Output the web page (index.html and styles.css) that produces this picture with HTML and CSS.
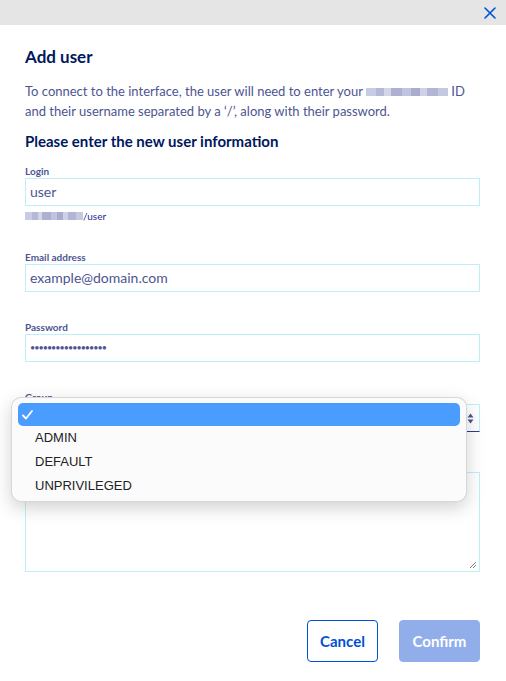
FILE: index.html
```html
<!DOCTYPE html>
<html lang="en">
<head>
<meta charset="utf-8">
<title>Add user</title>
<link rel="stylesheet" href="styles.css">
</head>
<body>
<div class="topbar">
  <button class="close" aria-label="Close">
    <svg width="12" height="12" viewBox="0 0 12 12"><path d="M1 1L11 11M11 1L1 11" stroke="#0050d7" stroke-width="1.6" fill="none" stroke-linecap="round"/></svg>
  </button>
</div>
<div class="content">
  <h1 class="title">Add user</h1>
  <p class="intro">To connect to the interface, the user will need to enter your <span class="blur blur-id"></span> ID<br>and their username separated by a ‘/’, along with their password.</p>
  <h2 class="subtitle">Please enter the new user information</h2>

  <div class="field">
    <label class="label">Login</label>
    <div class="input">user</div>
    <div class="hint"><span class="blur blur-hint"></span>/user</div>
  </div>

  <div class="field">
    <label class="label">Email address</label>
    <div class="input">example@domain.com</div>
  </div>

  <div class="field">
    <label class="label">Password</label>
    <div class="input password">••••••••••••••••••</div>
  </div>

  <div class="field group">
    <label class="label">Group</label>
    <div class="select">
      <svg class="arrows" width="7" height="11" viewBox="0 0 7 11"><path d="M3.5 0.5L6.5 4.5H0.5Z M3.5 10.5L6.5 6.5H0.5Z" fill="#4d5592"/></svg>
    </div>
    <div class="dropdown">
      <div class="option selected">
        <svg class="check" width="11" height="10" viewBox="0 0 11 10"><path d="M1 5.5L4 8.5L10 1" stroke="#fff" stroke-width="1.8" fill="none" stroke-linecap="round" stroke-linejoin="round"/></svg>
      </div>
      <div class="option">ADMIN</div>
      <div class="option">DEFAULT</div>
      <div class="option">UNPRIVILEGED</div>
    </div>
  </div>

  <div class="field field-textarea">
    <div class="label-spacer"></div>
    <div class="textarea">
      <svg class="resize" width="8" height="8" viewBox="0 0 8 8"><path d="M1 7L7 1M4 7L7 4" stroke="#777" stroke-width="0.9"/></svg>
    </div>
  </div>

  <div class="actions">
    <button class="btn btn-cancel">Cancel</button>
    <button class="btn btn-confirm">Confirm</button>
  </div>
</div>
</body>
</html>
```

FILE: styles.css
```css
* { box-sizing: border-box; }

body {
  margin: 0;
  background: #ffffff;
  font-family: Lato, "Open Sans", sans-serif;
  color: #4d5592;
}

.topbar {
  height: 25px;
  background: #e5e5e5;
  display: flex;
  justify-content: flex-end;
  align-items: center;
  padding-right: 10px;
}

.close {
  border: 0;
  background: none;
  padding: 0;
  width: 12px;
  height: 12px;
  display: flex;
}

.content {
  padding: 20px 26px 0 25px;
}

.title {
  margin: 0;
  font-size: 17px;
  line-height: 24px;
  font-weight: 700;
  color: #00185e;
}

.intro {
  margin: 12px 0 0;
  font-size: 13px;
  line-height: 20px;
  white-space: nowrap;
}

.blur {
  display: inline-block;
  vertical-align: middle;
  background: linear-gradient(90deg,
    #c9cae3 0 12%, #b6b8d7 12% 22%, #d4d5e9 22% 30%, #aeb0d2 30% 44%,
    #c2c3df 44% 55%, #a9abcf 55% 66%, #d0d1e7 66% 74%, #b3b5d5 74% 88%, #c6c7e1 88% 100%);
}

.blur-id {
  width: 82px;
  height: 8px;
  margin-top: -2px;
}

.blur-hint {
  width: 58px;
  height: 8px;
  margin-top: -2px;
}

.subtitle {
  margin: 10px 0 0;
  font-size: 15px;
  line-height: 20px;
  font-weight: 700;
  color: #00185e;
}

.field {
  position: relative;
  margin-bottom: 28px;
}

.subtitle + .field {
  margin-top: 13px;
}

.label {
  display: block;
  font-size: 10px;
  line-height: 14px;
  font-weight: 700;
  color: #4d5592;
}

.label-spacer {
  height: 12px;
}

.input {
  height: 28px;
  border: 1px solid #bdf0fb;
  padding: 0 4px;
  font-size: 14px;
  line-height: 26px;
  color: #4d5592;
}

.password {
  font-size: 9px;
  letter-spacing: -1px;
}

.hint {
  margin-top: 3px;
  margin-bottom: -1px;
  font-size: 10px;
  line-height: 14px;
  color: #1b2a8f;
}

.select {
  height: 28px;
  border: 1px solid #bdf0fb;
  border-bottom-color: #2a3b9f;
  display: flex;
  justify-content: flex-end;
  align-items: center;
  padding-right: 5px;
}

.dropdown {
  position: absolute;
  top: 7px;
  left: -14px;
  width: 456px;
  height: 105px;
  padding: 5px 6px;
  background: #fbfbfc;
  border: 1px solid rgba(0, 0, 0, 0.14);
  border-radius: 10px;
  box-shadow: 0 6px 18px rgba(0, 0, 0, 0.18);
  font-family: "Liberation Sans", Arial, sans-serif;
  z-index: 2;
}

.option {
  height: 24px;
  line-height: 24px;
  padding-left: 17px;
  font-size: 13px;
  color: #222222;
}

.option.selected {
  height: 23px;
  background: #4a9dff;
  border-radius: 5px;
  display: flex;
  align-items: center;
  padding-left: 4px;
}

.field-textarea {
  margin-bottom: 0;
}

.textarea {
  height: 100px;
  border: 1px solid #bdf0fb;
  display: flex;
  justify-content: flex-end;
  align-items: flex-end;
  padding: 0 2px 2px 0;
}

.actions {
  margin-top: 48px;
  display: flex;
  justify-content: flex-end;
  gap: 21px;
}

.btn {
  height: 42px;
  border-radius: 4px;
  font-family: Lato, "Open Sans", sans-serif;
  font-size: 15px;
  font-weight: 700;
  padding: 0;
}

.btn-cancel {
  width: 71px;
  background: #ffffff;
  border: 1px solid #0050d7;
  color: #0050d7;
}

.btn-confirm {
  width: 81px;
  background: #91aeea;
  border: 1px solid #91aeea;
  color: #ffffff;
}
```
